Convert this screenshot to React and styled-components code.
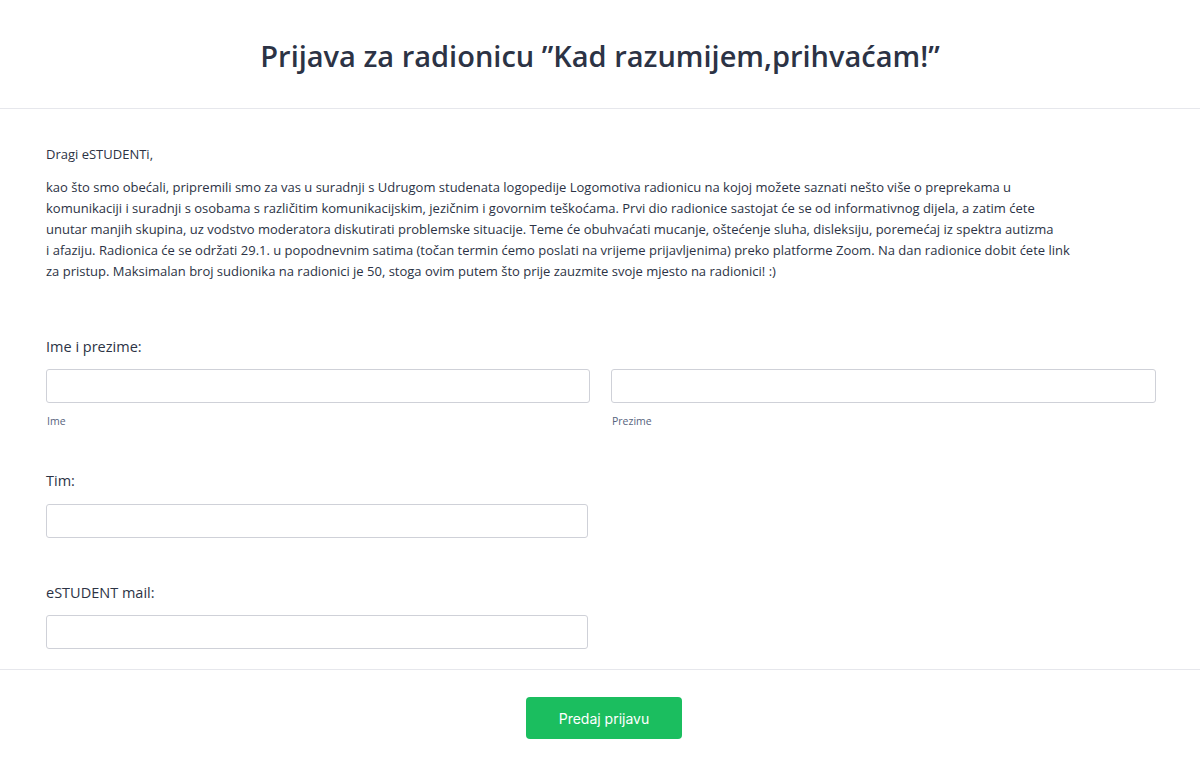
import React from "react";
import styled, { createGlobalStyle } from "styled-components";

const Global = createGlobalStyle`
  html, body { margin: 0; padding: 0; background: #fff; }
  body { font-family: "Open Sans", "Noto Sans", sans-serif; color: #2c3345; }
  * { box-sizing: border-box; }
`;

const Page = styled.div`
  width: 1200px;
  min-height: 773px;
  display: flex;
  flex-direction: column;
  background: #fff;
`;

const Header = styled.header`
  height: 109px;
  border-bottom: 1px solid #e6e7ec;
  display: flex;
  align-items: center;
  justify-content: center;
  padding-top: 2px;
`;

const Title = styled.h1`
  margin: 0;
  font-family: "Open Sans", sans-serif;
  font-weight: 600;
  font-size: 29px;
  letter-spacing: 0px;
  color: #2c3345;
`;

const Body = styled.main`
  padding: 35px 46px 0 46px;
  display: flex;
  flex-direction: column;
`;

const Text = styled.p`
  margin: 0 0 ${(p) => p.$mb || 0}px 0;
  font-size: 13px;
  line-height: 21px;
  color: #2c3345;
`;

const Field = styled.div`
  display: flex;
  flex-direction: column;
  margin-bottom: ${(p) => p.$mb || 0}px;
`;

const Label = styled.label`
  font-size: 14.5px;
  line-height: 20px;
  color: #2c3345;
  margin-bottom: ${(p) => p.$mb ?? 12}px;
`;

const Row = styled.div`
  display: grid;
  grid-template-columns: 544px 545px;
  column-gap: 21px;
`;

const Sub = styled.div`
  display: flex;
  flex-direction: column;
`;

const Input = styled.input`
  width: ${(p) => p.$w || "100%"};
  height: 34px;
  border: 1px solid #cfd1d8;
  border-radius: 3px;
  padding: 0 10px;
  font-size: 14px;
  background: #fff;
  outline: none;
`;

const SubLabel = styled.span`
  margin-top: 11px;
  font-size: 10.5px;
  color: #57647e;
  padding-left: 1px;
`;

const Footer = styled.footer`
  margin-top: 20px;
  border-top: 1px solid #e6e7ec;
  display: flex;
  justify-content: center;
  padding-top: 27px;
  padding-bottom: 35px;
`;

const Button = styled.button`
  width: 156px;
  height: 42px;
  border: none;
  border-radius: 4px;
  background: #1bbe5f;
  color: #fff;
  font-family: Inter, "Noto Sans", sans-serif;
  font-size: 14px;
  cursor: pointer;
  margin-left: 8px;
`;

export default function App() {
  return (
    <>
      <Global />
      <Page>
        <Header>
          <Title>Prijava za radionicu ”Kad razumijem,prihvaćam!”</Title>
        </Header>
        <Body>
          <Text $mb={12}>Dragi eSTUDENTi,</Text>
          <Text $mb={55}>
            kao što smo obećali, pripremili smo za vas u suradnji s Udrugom studenata logopedije Logomotiva radionicu na kojoj možete saznati nešto više o preprekama u
            <br />
            komunikaciji i suradnji s osobama s različitim komunikacijskim, jezičnim i govornim teškoćama. Prvi dio radionice sastojat će se od informativnog dijela, a zatim ćete
            <br />
            unutar manjih skupina, uz vodstvo moderatora diskutirati problemske situacije. Teme će obuhvaćati mucanje, oštećenje sluha, disleksiju, poremećaj iz spektra autizma
            <br />
            i afaziju. Radionica će se održati 29.1. u popodnevnim satima (točan termin ćemo poslati na vrijeme prijavljenima) preko platforme Zoom. Na dan radionice dobit ćete link
            <br />
            za pristup. Maksimalan broj sudionika na radionici je 50, stoga ovim putem što prije zauzmite svoje mjesto na radionici! :)
          </Text>
          <Field $mb={43}>
            <Label>Ime i prezime:</Label>
            <Row>
              <Sub>
                <Input />
                <SubLabel>Ime</SubLabel>
              </Sub>
              <Sub>
                <Input />
                <SubLabel>Prezime</SubLabel>
              </Sub>
            </Row>
          </Field>
          <Field $mb={45}>
            <Label $mb={13}>Tim:</Label>
            <Input $w="542px" />
          </Field>
          <Field>
            <Label>eSTUDENT mail:</Label>
            <Input $w="542px" />
          </Field>
        </Body>
        <Footer>
          <Button>Predaj prijavu</Button>
        </Footer>
      </Page>
    </>
  );
}
